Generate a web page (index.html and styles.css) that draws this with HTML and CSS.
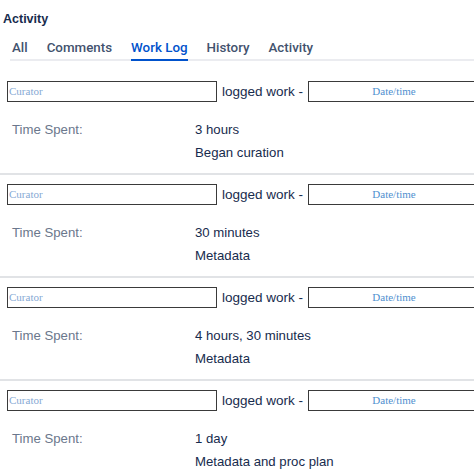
FILE: index.html
```html
<!DOCTYPE html>
<html>
<head>
<meta charset="utf-8">
<link rel="stylesheet" href="styles.css">
</head>
<body>
<div class="panel">
  <h2 class="title">Activity</h2>
  <div class="tabs">
    <span class="tab">All</span>
    <span class="tab">Comments</span>
    <span class="tab active">Work Log</span>
    <span class="tab">History</span>
    <span class="tab">Activity</span>
  </div>
  <div class="entries">
    <div class="entry">
      <div class="head">
        <span class="curator">Curator</span>
        <span class="logged">logged work -</span>
        <span class="date">Date/time</span>
      </div>
      <div class="details">
        <div class="row"><span class="label">Time Spent:</span><span class="value">3 hours</span></div>
        <div class="row"><span class="label"></span><span class="value">Began curation</span></div>
      </div>
    </div>
    <div class="entry">
      <div class="head">
        <span class="curator">Curator</span>
        <span class="logged">logged work -</span>
        <span class="date">Date/time</span>
      </div>
      <div class="details">
        <div class="row"><span class="label">Time Spent:</span><span class="value">30 minutes</span></div>
        <div class="row"><span class="label"></span><span class="value">Metadata</span></div>
      </div>
    </div>
    <div class="entry">
      <div class="head">
        <span class="curator">Curator</span>
        <span class="logged">logged work -</span>
        <span class="date">Date/time</span>
      </div>
      <div class="details">
        <div class="row"><span class="label">Time Spent:</span><span class="value">4 hours, 30 minutes</span></div>
        <div class="row"><span class="label"></span><span class="value">Metadata</span></div>
      </div>
    </div>
    <div class="entry">
      <div class="head">
        <span class="curator">Curator</span>
        <span class="logged">logged work -</span>
        <span class="date">Date/time</span>
      </div>
      <div class="details">
        <div class="row"><span class="label">Time Spent:</span><span class="value">1 day</span></div>
        <div class="row"><span class="label"></span><span class="value">Metadata and proc plan</span></div>
      </div>
    </div>
  </div>
</div>
</body>
</html>
```
FILE: styles.css
```css
html, body {
  margin: 0;
  padding: 0;
  overflow: hidden;
  background: #ffffff;
}
body {
  font-family: "Liberation Sans", Arial, sans-serif;
  font-size: 13.2px;
  color: #172b4d;
}
.panel {
  width: 474px;
}
.title {
  margin: 0;
  padding: 11px 0 0 3px;
  font-size: 12.5px;
  line-height: 16px;
  font-weight: bold;
  color: #172b4d;
}
.tabs {
  display: flex;
  gap: 19px;
  margin: 11px 0 0 10px;
  padding-left: 2px;
  border-bottom: 2px solid #ebecf0;
}
.tab {
  font-family: Roboto, "Liberation Sans", sans-serif;
  font-weight: 500;
  font-size: 13.35px;
  line-height: 20px;
  padding-bottom: 1px;
  color: #42526e;
  border-bottom: 2px solid transparent;
  margin-bottom: -2px;
}
.tab.active {
  color: #0052cc;
  border-bottom-color: #0052cc;
}
.entries {
  margin-top: 11px;
}
.entry {
  padding: 9px 0 9px 0;
  border-bottom: 2px solid #e1e3e6;
}
.head {
  display: flex;
  align-items: center;
  gap: 5px;
  padding-left: 7px;
  height: 21px;
}
.curator {
  box-sizing: border-box;
  width: 210px;
  height: 21px;
  border: 1.5px solid #3a3a3a;
  font-family: "Liberation Serif", "Times New Roman", serif;
  font-size: 11px;
  line-height: 18px;
  padding-left: 1px;
  color: #86a9d4;
  flex: none;
}
.logged {
  font-size: 13.5px;
  color: #172b4d;
  flex: none;
}
.date {
  box-sizing: border-box;
  width: 172px;
  height: 21px;
  border: 1.5px solid #3a3a3a;
  font-family: "Liberation Serif", "Times New Roman", serif;
  font-size: 11px;
  line-height: 18px;
  text-align: center;
  color: #4f90cf;
  flex: none;
}
.details {
  margin-top: 16px;
}
.row {
  display: flex;
  line-height: 23px;
}
.label {
  width: 183px;
  padding-left: 12px;
  color: #6b778c;
  flex: none;
}
.value {
  color: #172b4d;
}
```
